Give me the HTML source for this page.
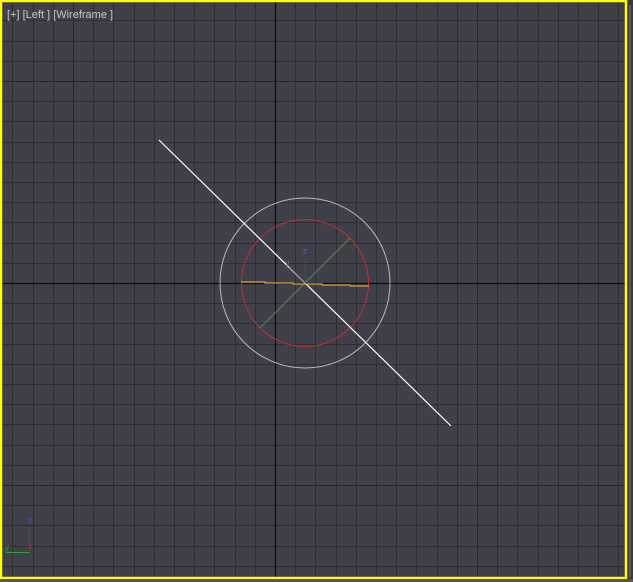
<!DOCTYPE html>
<html><head><style>
html,body{margin:0;padding:0;background:#3a3a3a;width:633px;height:582px;overflow:hidden}
svg{display:block}
</style></head><body>
<svg width="633" height="582" xmlns="http://www.w3.org/2000/svg">
<rect x="0" y="0" width="633" height="582" fill="#3b3b3e"/>
<rect x="2" y="2" width="623" height="575" fill="#40404a"/>
<g id="grid" stroke="#2e2e32" stroke-width="1.2" shape-rendering="crispEdges"></g>
<line x1="275.5" y1="2" x2="275.5" y2="577" stroke="#0c0c0e" stroke-width="1.3"/>
<line x1="2" y1="283.5" x2="625" y2="283.5" stroke="#0c0c0e" stroke-width="1.3"/>
<circle cx="305" cy="283" r="85" fill="none" stroke="#b8b8b8" stroke-width="1"/>
<circle cx="305" cy="283" r="63.5" fill="none" stroke="#c03030" stroke-width="1"/>
<line x1="159" y1="140" x2="451" y2="426" stroke="#ffffff" stroke-width="1.2"/>
<line x1="260" y1="328" x2="350" y2="238" stroke="#3a9a3a" stroke-width="1"/>
<line x1="289" y1="267" x2="305" y2="283" stroke="#888" stroke-width="1"/>
<text x="285" y="266" font-family="Liberation Sans,sans-serif" font-size="9" fill="#777">y</text>
<line x1="305.5" y1="260" x2="305.5" y2="283" stroke="#4040a0" stroke-width="1"/>
<text x="303" y="254" font-family="Liberation Sans,sans-serif" font-size="9" fill="#5050b0" font-weight="bold">z</text>
<polyline points="241,282 265,282 265,283 293,283 293,284 322,284 322,285 350,285 350,286 369,286" fill="none" stroke="#e0a030" stroke-width="1.2"/>
<line x1="6" y1="552.5" x2="30" y2="552.5" stroke="#3a9a3a" stroke-width="1"/>
<line x1="29.5" y1="527" x2="29.5" y2="552" stroke="#4040a0" stroke-width="1"/>
<text x="28" y="523" font-family="Liberation Sans,sans-serif" font-size="8" fill="#5050b0">z</text>
<text x="5" y="550" font-family="Liberation Sans,sans-serif" font-size="8" fill="#3a9a3a">y</text>
<text x="28" y="549" font-family="Liberation Sans,sans-serif" font-size="8" fill="#c03030">x</text>
<text x="7" y="18" font-family="Liberation Sans,sans-serif" font-size="11" fill="#c8c8c8" xml:space="preserve">[+] [Left ] [Wireframe ]</text>
<rect x="1" y="1" width="625" height="577" fill="none" stroke="#ffff00" stroke-width="2.5"/>
<line x1="630" y1="5" x2="630" y2="577" stroke="#777" stroke-width="1"/>
<rect x="0" y="579" width="633" height="3" fill="#555"/>
</svg>
<script>
var g=document.getElementById('grid'),ns='http://www.w3.org/2000/svg',s=20.2;
for(var i=-14;i<=18;i++){var x=Math.round(275+i*s)+.5;if(x<3||x>624)continue;var l=document.createElementNS(ns,'line');l.setAttribute('x1',x);l.setAttribute('x2',x);l.setAttribute('y1',2);l.setAttribute('y2',577);if(i%10==0)l.setAttribute('stroke','#26262a');g.appendChild(l);}
for(var j=-14;j<=15;j++){var y=Math.round(283+j*s)+.5;if(y<3||y>576)continue;var l=document.createElementNS(ns,'line');l.setAttribute('y1',y);l.setAttribute('y2',y);l.setAttribute('x1',2);l.setAttribute('x2',625);if(j%10==0)l.setAttribute('stroke','#26262a');g.appendChild(l);}
</script>
</body></html>
